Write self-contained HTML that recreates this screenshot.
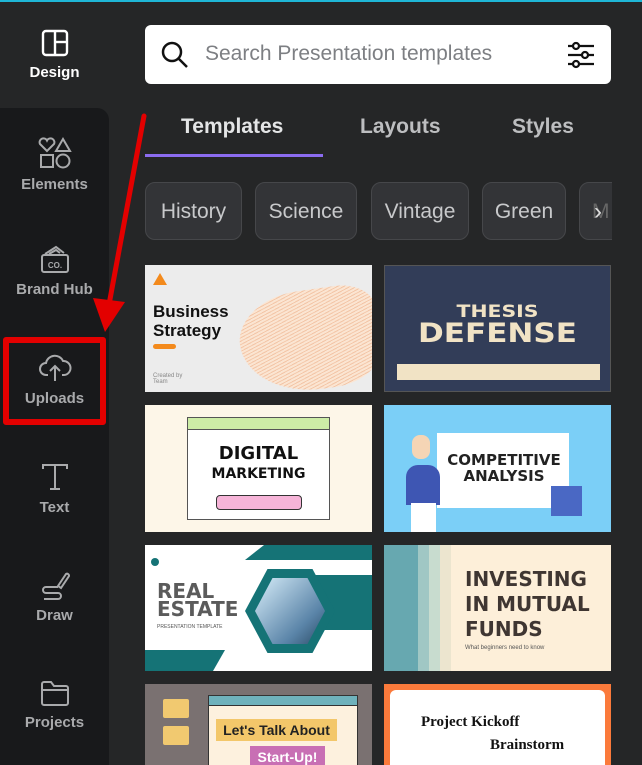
<!DOCTYPE html>
<html><head><meta charset="utf-8"><style>
*{margin:0;padding:0;box-sizing:border-box}
body{width:642px;height:765px;overflow:hidden;background:#252627;font-family:"Liberation Sans",sans-serif;position:relative}
.topline{position:absolute;left:0;top:0;width:642px;height:2px;background:#1fb6d6}
.side{position:absolute;left:0;top:108px;width:109px;height:657px;background:#18191b;border-top-right-radius:12px}
.item{position:absolute;left:0;width:109px;text-align:center;color:#a9aaac;font-weight:bold;font-size:15px}
.item svg{display:block;margin:0 auto 7px}
.search{position:absolute;left:145px;top:25px;width:466px;height:59px;background:#fff;border-radius:6px}
.search span{position:absolute;left:60px;top:17px;font-size:21px;color:#7d7f83}
.tab{position:absolute;top:115px;font-size:21px;font-weight:bold;color:#bdbec0}
.ul{position:absolute;left:145px;top:154px;width:178px;height:3px;background:#8b6cf0}
.chip{position:absolute;top:182px;height:58px;border:1px solid #46474a;background:#333437;border-radius:10px;color:#c8c9cb;font-size:21px;line-height:58px;text-align:center}
.t{position:absolute;overflow:hidden}
</style></head><body>
<div class="topline"></div>
<div class="side"></div>
<div class="item" style="top:29px;color:#fff">
<svg width="28" height="28" viewBox="0 0 28 28" fill="none" stroke="#fff" stroke-width="2.4"><rect x="2" y="2" width="24" height="24" rx="3"/><line x1="14" y1="2" x2="14" y2="26"/><line x1="14" y1="13" x2="26" y2="13"/></svg>Design</div>
<div class="item" style="top:137px">
<svg width="34" height="32" viewBox="0 0 34 32" fill="none" stroke="#a9aaac" stroke-width="2"><path d="M9 14 L2 7 A3.5 3.5 0 0 1 9 3.5 A3.5 3.5 0 0 1 16 7 Z"/><path d="M25 2 L32 14 H18 Z"/><rect x="3" y="18" width="12" height="12"/><circle cx="25" cy="24" r="6.5"/></svg>Elements</div>
<div class="item" style="top:244px">
<svg width="30" height="30" viewBox="0 0 30 30" fill="none" stroke="#a9aaac" stroke-width="2"><rect x="2" y="11" width="26" height="17" rx="2"/><path d="M5 10 L16 3 L24 9"/><path d="M9 10 L16 6 L20 9"/><text x="15" y="24" font-size="8" font-weight="bold" fill="#a9aaac" stroke="none" text-anchor="middle" font-family="Liberation Sans">CO.</text></svg>Brand Hub</div>
<div class="item" style="top:353px">
<svg width="34" height="30" viewBox="0 0 34 30" fill="none" stroke="#a9aaac" stroke-width="2"><path d="M10 22 H8 A6 6 0 0 1 8 10 A9 9 0 0 1 25 8 A7 7 0 0 1 26 22 H24"/><path d="M17 28 V14 M12 18 L17 13 L22 18"/></svg>Uploads</div>
<div class="item" style="top:462px">
<svg width="30" height="30" viewBox="0 0 30 30" fill="none" stroke="#a9aaac" stroke-width="2"><path d="M3 7 V3 H27 V7 M15 3 V27 M10 27 H20"/></svg>Text</div>
<div class="item" style="top:570px">
<svg width="30" height="30" viewBox="0 0 30 30" fill="none" stroke="#a9aaac" stroke-width="2"><path d="M18 16 L26 4 A2 2 0 0 1 29 6 L21 18 Z"/><path d="M18 17 H6 A3 3 0 0 0 6 23 H18 A3 3 0 0 1 18 29 H4"/></svg>Draw</div>
<div class="item" style="top:679px">
<svg width="30" height="28" viewBox="0 0 30 28" fill="none" stroke="#a9aaac" stroke-width="2"><path d="M2 5 A2 2 0 0 1 4 3 H11 L14 7 H26 A2 2 0 0 1 28 9 V24 A2 2 0 0 1 26 26 H4 A2 2 0 0 1 2 24 Z M2 11 H28"/></svg>Projects</div>

<div class="search">
<svg style="position:absolute;left:15px;top:15px" width="30" height="30" viewBox="0 0 30 30" fill="none" stroke="#111" stroke-width="2.5"><circle cx="12" cy="12" r="9"/><path d="M19 19 L27 27"/></svg>
<span>Search Presentation templates</span>
<svg style="position:absolute;left:421px;top:15px" width="30" height="30" viewBox="0 0 30 30" fill="none" stroke="#111" stroke-width="2.3"><path d="M2 6H28M2 15H28M2 24H28"/><circle cx="10" cy="6" r="3" fill="#fff"/><circle cx="19" cy="15" r="3" fill="#fff"/><circle cx="10" cy="24" r="3" fill="#fff"/></svg>
</div>
<div class="tab" style="left:181px;color:#e4e5e6">Templates</div>
<div class="tab" style="left:360px">Layouts</div>
<div class="tab" style="left:512px">Styles</div>
<div class="ul"></div>
<div class="chip" style="left:145px;width:97px">History</div>
<div class="chip" style="left:255px;width:102px">Science</div>
<div class="chip" style="left:371px;width:98px">Vintage</div>
<div class="chip" style="left:482px;width:84px">Green</div>
<div class="chip" style="left:579px;width:50px;text-align:left;padding-left:12px;color:#666">M<span style="position:absolute;left:14px;top:0;color:#ddd;font-size:24px">›</span></div>
<div style="position:absolute;left:612px;top:170px;width:30px;height:80px;background:#252627"></div>

<!-- row1 -->
<div class="t" style="left:145px;top:265px;width:227px;height:127px;background:#ececec">
<div style="position:absolute;left:8px;top:8px;width:14px;height:12px;background:#f38a1c;clip-path:polygon(50% 0,100% 100%,0 100%)"></div>
<div style="position:absolute;left:8px;top:37px;font-size:17px;font-weight:bold;color:#111;line-height:19px">Business<br>Strategy</div>
<div style="position:absolute;left:8px;top:79px;width:23px;height:5px;background:#f38a1c;border-radius:3px"></div>
<div style="position:absolute;left:8px;top:108px;font-size:6px;color:#888">Created by<br>Team</div>
<div style="position:absolute;left:95px;top:25px;width:140px;height:100px;border-radius:50% 30% 40% 60%;background:repeating-linear-gradient(160deg,#f3c6a8 0 1px,#fbe5d2 1px 3px);transform:rotate(-8deg)"></div>
</div>
<div class="t" style="left:384px;top:265px;width:227px;height:127px;background:#323d58;border:1px solid #555">
<div style="position:absolute;left:0;width:100%;top:36px;text-align:center;font-size:17px;font-weight:900;color:#f1e3c5;font-family:'DejaVu Sans';transform:scaleX(1.2)">THESIS</div>
<div style="position:absolute;left:0;width:100%;top:52px;text-align:center;font-size:27px;font-weight:900;color:#f1e3c5;font-family:'DejaVu Sans';transform:scaleX(1.15)">DEFENSE</div>
<div style="position:absolute;left:12px;top:98px;width:203px;height:16px;background:#f1e3c5"></div>
</div>
<div class="t" style="left:145px;top:405px;width:227px;height:127px;background:#fdf6e8">
<div style="position:absolute;left:42px;top:12px;width:143px;height:103px;background:#fff;border:1px solid #555"><div style="height:12px;background:#cdeda6;border-bottom:1px solid #555"></div>
<div style="position:absolute;left:0;width:100%;top:26px;text-align:center;font-size:18px;font-weight:900;color:#111;line-height:19px;font-family:'DejaVu Sans'">DIGITAL<br><span style="font-size:14px">MARKETING</span></div>
<div style="position:absolute;left:28px;top:77px;width:86px;height:15px;background:#f6b4d8;border:1px solid #333;border-radius:4px"></div></div>
</div>
<div class="t" style="left:384px;top:405px;width:227px;height:127px;background:#7bcff7">
<div style="position:absolute;left:53px;top:28px;width:132px;height:75px;background:#fff"></div>
<div style="position:absolute;left:55px;top:47px;width:130px;text-align:center;font-size:15px;font-weight:900;color:#222;line-height:16px;font-family:'DejaVu Sans'">COMPETITIVE<br>ANALYSIS</div>
<div style="position:absolute;left:22px;top:60px;width:34px;height:40px;background:#3e56b3;border-radius:12px 12px 0 0"></div>
<div style="position:absolute;left:27px;top:98px;width:25px;height:30px;background:#fff"></div>
<div style="position:absolute;left:28px;top:30px;width:18px;height:24px;background:#f5d5b5;border-radius:8px"></div>
<div style="position:absolute;left:167px;top:81px;width:31px;height:30px;background:#4a68c4"></div>
</div>
<!-- row2 -->
<div class="t" style="left:145px;top:545px;width:227px;height:126px;background:#fff">
<div style="position:absolute;left:6px;top:13px;width:8px;height:8px;border-radius:50%;background:#157376"></div>
<div style="position:absolute;left:12px;top:37px;font-size:20px;font-weight:900;color:#5b5b5b;line-height:18px;font-family:'DejaVu Sans'">REAL<br>ESTATE</div>
<div style="position:absolute;left:12px;top:79px;font-size:5px;color:#555">PRESENTATION TEMPLATE</div>
<div style="position:absolute;left:100px;top:0;width:127px;height:15px;background:#157376;clip-path:polygon(15% 0,100% 0,100% 100%,0 100%)"></div>
<div style="position:absolute;left:0;top:105px;width:80px;height:21px;background:#157376;clip-path:polygon(0 0,100% 0,85% 100%,0 100%)"></div>
<div style="position:absolute;left:155px;top:30px;width:72px;height:55px;background:#157376"></div>
<div style="position:absolute;left:100px;top:24px;width:90px;height:84px;background:#157376;clip-path:polygon(25% 0,75% 0,100% 50%,75% 100%,25% 100%,0 50%)"></div>
<div style="position:absolute;left:110px;top:33px;width:70px;height:66px;background:linear-gradient(135deg,#d8eefa,#5a84a8 70%,#2b4b66);clip-path:polygon(25% 0,75% 0,100% 50%,75% 100%,25% 100%,0 50%)"></div>
</div>
<div class="t" style="left:384px;top:545px;width:227px;height:126px;background:#fdefd9">
<div style="position:absolute;left:0;top:0;width:34px;height:126px;background:#67a8b0"></div>
<div style="position:absolute;left:34px;top:0;width:11px;height:126px;background:#a0c7c4"></div>
<div style="position:absolute;left:45px;top:0;width:11px;height:126px;background:#c8dccf"></div>
<div style="position:absolute;left:56px;top:0;width:11px;height:126px;background:#ece5cf"></div>
<div style="position:absolute;left:81px;top:22px;font-size:20px;font-weight:900;color:#3f3632;line-height:25px;font-family:'DejaVu Sans'">INVESTING<br>IN MUTUAL<br>FUNDS</div>
<div style="position:absolute;left:81px;top:100px;font-size:6px;color:#555">What beginners need to know</div>
</div>
<!-- row3 -->
<div class="t" style="left:145px;top:684px;width:227px;height:81px;background:#7a7171">
<div style="position:absolute;left:18px;top:15px;width:26px;height:19px;background:#f1c970;border-radius:2px"></div>
<div style="position:absolute;left:18px;top:42px;width:26px;height:19px;background:#f1c970;border-radius:2px"></div>
<div style="position:absolute;left:63px;top:11px;width:150px;height:80px;background:#fdf1de;border:1px solid #333"><div style="height:10px;background:#6fb2bc;border-bottom:1px solid #333"></div></div>
<div style="position:absolute;left:71px;top:35px;width:121px;height:22px;background:#f3c76a;font-size:14px;font-weight:bold;color:#222;text-align:center;line-height:22px">Let's Talk About</div>
<div style="position:absolute;left:105px;top:62px;width:75px;height:22px;background:#c86fb4;font-size:14px;font-weight:bold;color:#fff;text-align:center;line-height:22px">Start-Up!</div>
</div>
<div class="t" style="left:384px;top:684px;width:227px;height:81px;background:#fb7a3b">
<div style="position:absolute;left:6px;top:6px;width:215px;height:90px;background:#fff;border-radius:6px"></div>
<div style="position:absolute;left:37px;top:30px;font-size:15px;font-weight:bold;color:#111;font-family:'Liberation Serif'">Project Kickoff</div>
<div style="position:absolute;left:106px;top:53px;font-size:15px;font-weight:bold;color:#111;font-family:'Liberation Serif'">Brainstorm</div>
</div>

<div style="position:absolute;left:3px;top:337px;width:103px;height:88px;border:6px solid #e30000;border-radius:3px"></div>
<svg style="position:absolute;left:0;top:0" width="160" height="340"><line x1="144" y1="116" x2="108" y2="310" stroke="#e30000" stroke-width="5" stroke-linecap="round"/><path d="M93 298 L105 332 L125 302 Z" fill="#e30000"/></svg>
</body></html>
